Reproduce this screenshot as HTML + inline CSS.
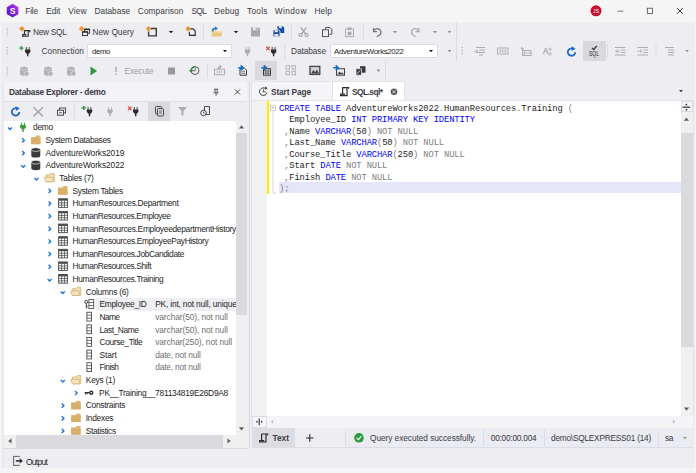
<!DOCTYPE html><html><head><meta charset="utf-8"><title>dbForge Studio</title><style>html,body{margin:0;padding:0;background:#eeeef2;}
#app{position:relative;width:696px;height:473px;overflow:hidden;background:#eeeef2;font-family:"Liberation Sans",sans-serif;}
#app div{position:absolute;}
#app span{position:absolute;white-space:pre;}
#app svg{position:absolute;left:0;top:0;}
#app .cl{position:absolute;left:279px;white-space:pre;font-family:"Liberation Mono","DejaVu Sans Mono",monospace;font-size:8.8px;line-height:11.43px;letter-spacing:-0.123px;height:11.43px;}
#app .cl b{font-weight:400;}
</style></head><body><div id="app"><div style="left:0px;top:0px;width:696px;height:21.7px;background:#f5f5f5;"></div>
<div style="left:0px;top:22px;width:696px;height:451px;background:#eeeef2;"></div>
<div style="left:0px;top:22px;width:1.4px;height:451px;background:#f5f5f5;"></div>
<div style="left:695px;top:22px;width:1px;height:451px;background:#f5f5f5;"></div>
<div style="left:0px;top:467.7px;width:696px;height:5.3px;background:#f5f5f6;"></div>
<div style="left:3.7px;top:82px;width:243.8px;height:19px;background:#f2f2f7;"></div>
<div style="left:3.7px;top:100.6px;width:243.8px;height:0.8px;background:#dedee8;"></div>
<div style="left:1.5px;top:82px;width:2.2px;height:386px;background:#eaeaf1;"></div>
<div style="left:3.7px;top:120.5px;width:232px;height:314.5px;background:#ffffff;"></div>
<div style="left:235.7px;top:120.5px;width:11.8px;height:314.5px;background:#f0f0f0;"></div>
<div style="left:235.7px;top:133px;width:11.8px;height:182px;background:#d9d9de;"></div>
<div style="left:3.7px;top:435px;width:244px;height:12.5px;background:#f0f0f0;"></div>
<div style="left:16px;top:435px;width:207px;height:12.5px;background:#d9d9de;"></div>
<div style="left:235.7px;top:435px;width:11.8px;height:12.5px;background:#f0f0f0;"></div>
<div style="left:96px;top:298px;width:139.7px;height:12.5px;background:#eeeef3;"></div>
<div style="left:148px;top:101.5px;width:22px;height:19px;background:#d8d8dd;"></div>
<div style="left:583px;top:41px;width:23px;height:19.5px;background:#d8d8dd;"></div>
<div style="left:254.8px;top:61px;width:22.2px;height:19px;background:#d8d8dd;"></div>
<div style="left:456px;top:22px;width:1px;height:39px;background:#dcdce6;"></div>
<div style="left:385px;top:61px;width:1px;height:19.5px;background:#dcdce2;"></div>
<div style="left:88px;top:44.5px;width:143px;height:12.5px;background:#ffffff;box-shadow:0 0 0 0.6px #d0d0d8;"></div>
<div style="left:331px;top:44.5px;width:106px;height:12.5px;background:#ffffff;box-shadow:0 0 0 0.6px #d0d0d8;"></div>
<div style="left:252px;top:82px;width:80px;height:19px;background:#f5f5f8;box-shadow:0 0 0 0.6px #dcdce4;"></div>
<div style="left:333px;top:82px;width:70.5px;height:19.5px;background:#ffffff;box-shadow:0 0 0 0.6px #dcdce4;"></div>
<div style="left:252px;top:101px;width:440.5px;height:315px;background:#ffffff;box-shadow:0 0 0 0.6px #dcdce4;"></div>
<div style="left:252px;top:101px;width:14.5px;height:315px;background:#f2f2f2;"></div>
<div style="left:266.5px;top:101px;width:2.5px;height:92.5px;background:#ffee00;"></div>
<div style="left:279px;top:182px;width:401.5px;height:10.9px;background:#e6e6fb;"></div>
<div style="left:680.5px;top:101px;width:12px;height:315px;background:#f0f0f0;"></div>
<div style="left:680.5px;top:101.2px;width:12px;height:11.3px;background:#f6f6f9;box-shadow:inset 0 0 0 0.7px #d2d2e2;"></div>
<div style="left:680.5px;top:133px;width:12px;height:214px;background:#dadade;"></div>
<div style="left:252px;top:416px;width:440.5px;height:12px;background:#f4f4f6;"></div>
<div style="left:252px;top:416.2px;width:14.6px;height:11.5px;background:#f6f6f9;box-shadow:inset 0 0 0 0.7px #d2d2e2;"></div>
<div style="left:248.6px;top:82px;width:0.8px;height:366px;background:#dadae6;"></div>
<div style="left:3.3px;top:447.6px;width:246px;height:0.8px;background:#dadae6;"></div>
<div style="left:252px;top:428px;width:440.5px;height:19.5px;background:#ebebf2;"></div>
<div style="left:252px;top:428px;width:43px;height:19.5px;background:#dcdce1;"></div>
<div style="left:295px;top:428px;width:50px;height:19.5px;background:#eeeef2;"></div>
<div style="left:252px;top:447px;width:440.5px;height:1px;background:#dcdce6;"></div>
<div style="left:344.5px;top:430px;width:1px;height:16px;background:#dcdce4;"></div>
<div style="left:483px;top:430px;width:1px;height:16px;background:#dcdce4;"></div>
<div style="left:544px;top:430px;width:1px;height:16px;background:#dcdce4;"></div>
<div style="left:657.5px;top:430px;width:1px;height:16px;background:#dcdce4;"></div>
<svg width="696" height="473" viewBox="0 0 696 473"><path d="M8.0 127.4 L10.0 129.4 L12.0 127.4" fill="none" stroke="#1c78d2" stroke-width="1.4"/>
<path d="M21.6 122.5 v2.6 M24.4 122.5 v2.6" stroke="#3a9a3a" stroke-width="1"/><path d="M20.2 124.9 h5.6 v2.4 l-1.5 2 h-2.6 l-1.5 -2z" fill="#3a9a3a"/><path d="M23 129.0 v3.1" stroke="#3a9a3a" stroke-width="1.4"/>
<path d="M22.2 138.33 L24.3 140.43 L22.2 142.53" fill="none" stroke="#1c78d2" stroke-width="1.4"/>
<path d="M31.0 137.03 h4.2 l1.2 -1.5 h4 v8.6 h-9.4z" fill="#dcb67a"/><rect x="31.0" y="138.03" width="9.4" height="6.1" fill="#d9ae68"/>
<path d="M22.2 150.96 L24.3 153.06 L22.2 155.16" fill="none" stroke="#1c78d2" stroke-width="1.4"/>
<path d="M31.3 149.66 v6 a4.5 1.9 0 0 0 9 0 v-6z" fill="#3a3a3a"/><ellipse cx="35.8" cy="149.56" rx="4.5" ry="1.9" fill="#3a3a3a" stroke="#fff" stroke-width="0.6"/>
<path d="M21.2 165.29 L23.2 167.29 L25.2 165.29" fill="none" stroke="#1c78d2" stroke-width="1.4"/>
<path d="M31.3 162.29 v6 a4.5 1.9 0 0 0 9 0 v-6z" fill="#3a3a3a"/><ellipse cx="35.8" cy="162.19" rx="4.5" ry="1.9" fill="#3a3a3a" stroke="#fff" stroke-width="0.6"/>
<path d="M34.4 177.92 L36.4 179.92 L38.4 177.92" fill="none" stroke="#1c78d2" stroke-width="1.4"/>
<path d="M46.099999999999994 174.92 h3.4 l1.2 -1.4 h3.6 v8.2 h-8.2z" fill="#efdcb4" stroke="#d9b170" stroke-width="0.8"/><path d="M44.3 177.32 h7.8 l1.4 4.4 h-7.8z" fill="#f3e4c4" stroke="#d9b170" stroke-width="0.8"/>
<path d="M48.599999999999994 188.85000000000002 L50.699999999999996 190.95000000000002 L48.599999999999994 193.05" fill="none" stroke="#1c78d2" stroke-width="1.4"/>
<path d="M57.99999999999999 187.55 h4.2 l1.2 -1.5 h4 v8.6 h-9.4z" fill="#dcb67a"/><rect x="57.99999999999999" y="188.55" width="9.4" height="6.1" fill="#d9ae68"/>
<path d="M48.599999999999994 201.48000000000002 L50.699999999999996 203.58 L48.599999999999994 205.68" fill="none" stroke="#1c78d2" stroke-width="1.4"/>
<rect x="58.599999999999994" y="198.78000000000003" width="8.8" height="8.6" fill="#fff" stroke="#4a4a4a" stroke-width="0.9"/><rect x="58.599999999999994" y="198.78000000000003" width="8.8" height="1.9" fill="#4a4a4a"/><path d="M61.599999999999994 200.58 v6.8 M64.5 200.58 v6.8 M58.599999999999994 202.78000000000003 h8.8 M58.599999999999994 205.08 h8.8" stroke="#4a4a4a" stroke-width="0.75" fill="none"/>
<path d="M48.599999999999994 214.11 L50.699999999999996 216.21 L48.599999999999994 218.31" fill="none" stroke="#1c78d2" stroke-width="1.4"/>
<rect x="58.599999999999994" y="211.41000000000003" width="8.8" height="8.6" fill="#fff" stroke="#4a4a4a" stroke-width="0.9"/><rect x="58.599999999999994" y="211.41000000000003" width="8.8" height="1.9" fill="#4a4a4a"/><path d="M61.599999999999994 213.21 v6.8 M64.5 213.21 v6.8 M58.599999999999994 215.41000000000003 h8.8 M58.599999999999994 217.71 h8.8" stroke="#4a4a4a" stroke-width="0.75" fill="none"/>
<path d="M48.599999999999994 226.74 L50.699999999999996 228.84 L48.599999999999994 230.94" fill="none" stroke="#1c78d2" stroke-width="1.4"/>
<rect x="58.599999999999994" y="224.04000000000002" width="8.8" height="8.6" fill="#fff" stroke="#4a4a4a" stroke-width="0.9"/><rect x="58.599999999999994" y="224.04000000000002" width="8.8" height="1.9" fill="#4a4a4a"/><path d="M61.599999999999994 225.84 v6.8 M64.5 225.84 v6.8 M58.599999999999994 228.04000000000002 h8.8 M58.599999999999994 230.34 h8.8" stroke="#4a4a4a" stroke-width="0.75" fill="none"/>
<path d="M48.599999999999994 239.37 L50.699999999999996 241.47 L48.599999999999994 243.57" fill="none" stroke="#1c78d2" stroke-width="1.4"/>
<rect x="58.599999999999994" y="236.67000000000002" width="8.8" height="8.6" fill="#fff" stroke="#4a4a4a" stroke-width="0.9"/><rect x="58.599999999999994" y="236.67000000000002" width="8.8" height="1.9" fill="#4a4a4a"/><path d="M61.599999999999994 238.47 v6.8 M64.5 238.47 v6.8 M58.599999999999994 240.67000000000002 h8.8 M58.599999999999994 242.97 h8.8" stroke="#4a4a4a" stroke-width="0.75" fill="none"/>
<path d="M48.599999999999994 252.0 L50.699999999999996 254.1 L48.599999999999994 256.2" fill="none" stroke="#1c78d2" stroke-width="1.4"/>
<rect x="58.599999999999994" y="249.3" width="8.8" height="8.6" fill="#fff" stroke="#4a4a4a" stroke-width="0.9"/><rect x="58.599999999999994" y="249.3" width="8.8" height="1.9" fill="#4a4a4a"/><path d="M61.599999999999994 251.1 v6.8 M64.5 251.1 v6.8 M58.599999999999994 253.3 h8.8 M58.599999999999994 255.6 h8.8" stroke="#4a4a4a" stroke-width="0.75" fill="none"/>
<path d="M48.599999999999994 264.63 L50.699999999999996 266.73 L48.599999999999994 268.83" fill="none" stroke="#1c78d2" stroke-width="1.4"/>
<rect x="58.599999999999994" y="261.93" width="8.8" height="8.6" fill="#fff" stroke="#4a4a4a" stroke-width="0.9"/><rect x="58.599999999999994" y="261.93" width="8.8" height="1.9" fill="#4a4a4a"/><path d="M61.599999999999994 263.73 v6.8 M64.5 263.73 v6.8 M58.599999999999994 265.93 h8.8 M58.599999999999994 268.23 h8.8" stroke="#4a4a4a" stroke-width="0.75" fill="none"/>
<path d="M47.599999999999994 278.96 L49.599999999999994 280.96 L51.599999999999994 278.96" fill="none" stroke="#1c78d2" stroke-width="1.4"/>
<rect x="58.599999999999994" y="274.56" width="8.8" height="8.6" fill="#fff" stroke="#4a4a4a" stroke-width="0.9"/><rect x="58.599999999999994" y="274.56" width="8.8" height="1.9" fill="#4a4a4a"/><path d="M61.599999999999994 276.36 v6.8 M64.5 276.36 v6.8 M58.599999999999994 278.56 h8.8 M58.599999999999994 280.86 h8.8" stroke="#4a4a4a" stroke-width="0.75" fill="none"/>
<path d="M60.8 291.59 L62.8 293.59 L64.8 291.59" fill="none" stroke="#1c78d2" stroke-width="1.4"/>
<path d="M72.60000000000001 288.59 h3.4 l1.2 -1.4 h3.6 v8.2 h-8.2z" fill="#efdcb4" stroke="#d9b170" stroke-width="0.8"/><path d="M70.8 290.99 h7.8 l1.4 4.4 h-7.8z" fill="#f3e4c4" stroke="#d9b170" stroke-width="0.8"/>
<rect x="88.9" y="299.62000000000006" width="4.8" height="8.8" fill="#fff" stroke="#4a4a4a" stroke-width="0.9"/><path d="M88.9 302.52000000000004 h4.8 M88.9 305.52000000000004 h4.8" stroke="#4a4a4a" stroke-width="0.8"/><circle cx="86.3" cy="301.82000000000005" r="1.5" fill="#fff" stroke="#3c3c3c" stroke-width="1"/><path d="M86.3 303.22 v5.4 M86.3 306.62000000000006 h1.4" stroke="#3c3c3c" stroke-width="1"/>
<rect x="86.9" y="312.25000000000006" width="4.6" height="8.8" fill="#fff" stroke="#4a4a4a" stroke-width="0.9"/><path d="M86.9 315.15000000000003 h4.6 M86.9 318.15000000000003 h4.6" stroke="#4a4a4a" stroke-width="0.8"/>
<rect x="86.9" y="324.88000000000005" width="4.6" height="8.8" fill="#fff" stroke="#4a4a4a" stroke-width="0.9"/><path d="M86.9 327.78000000000003 h4.6 M86.9 330.78000000000003 h4.6" stroke="#4a4a4a" stroke-width="0.8"/>
<rect x="86.9" y="337.51000000000005" width="4.6" height="8.8" fill="#fff" stroke="#4a4a4a" stroke-width="0.9"/><path d="M86.9 340.41 h4.6 M86.9 343.41 h4.6" stroke="#4a4a4a" stroke-width="0.8"/>
<rect x="86.9" y="350.14000000000004" width="4.6" height="8.8" fill="#fff" stroke="#4a4a4a" stroke-width="0.9"/><path d="M86.9 353.04 h4.6 M86.9 356.04 h4.6" stroke="#4a4a4a" stroke-width="0.8"/>
<rect x="86.9" y="362.77000000000004" width="4.6" height="8.8" fill="#fff" stroke="#4a4a4a" stroke-width="0.9"/><path d="M86.9 365.67 h4.6 M86.9 368.67 h4.6" stroke="#4a4a4a" stroke-width="0.8"/>
<path d="M60.8 380.0 L62.8 382.0 L64.8 380.0" fill="none" stroke="#1c78d2" stroke-width="1.4"/>
<path d="M72.60000000000001 377.0 h3.4 l1.2 -1.4 h3.6 v8.2 h-8.2z" fill="#efdcb4" stroke="#d9b170" stroke-width="0.8"/><path d="M70.8 379.40000000000003 h7.8 l1.4 4.4 h-7.8z" fill="#f3e4c4" stroke="#d9b170" stroke-width="0.8"/>
<path d="M75.0 390.93 L77.1 393.03000000000003 L75.0 395.13" fill="none" stroke="#1c78d2" stroke-width="1.4"/>
<circle cx="91.3" cy="392.73" r="1.5" fill="none" stroke="#333" stroke-width="1.4"/><path d="M84.7 392.73 h5" stroke="#333" stroke-width="1.4"/><path d="M85.4 392.73 v1.7 M87.1 392.73 v1.5" stroke="#333" stroke-width="1"/>
<path d="M61.8 403.56 L63.9 405.66 L61.8 407.76" fill="none" stroke="#1c78d2" stroke-width="1.4"/>
<path d="M71.2 402.26 h4.2 l1.2 -1.5 h4 v8.6 h-9.4z" fill="#dcb67a"/><rect x="71.2" y="403.26" width="9.4" height="6.1" fill="#d9ae68"/>
<path d="M61.8 416.19 L63.9 418.29 L61.8 420.39" fill="none" stroke="#1c78d2" stroke-width="1.4"/>
<path d="M71.2 414.89 h4.2 l1.2 -1.5 h4 v8.6 h-9.4z" fill="#dcb67a"/><rect x="71.2" y="415.89" width="9.4" height="6.1" fill="#d9ae68"/>
<path d="M61.8 428.82 L63.9 430.92 L61.8 433.02" fill="none" stroke="#1c78d2" stroke-width="1.4"/>
<path d="M71.2 427.52 h4.2 l1.2 -1.5 h4 v8.6 h-9.4z" fill="#dcb67a"/><rect x="71.2" y="428.52" width="9.4" height="6.1" fill="#d9ae68"/>
<rect x="270.5" y="105.2" width="5" height="5" fill="#fff" stroke="#b4b4b4" stroke-width="0.7"/><path d="M271.7 107.7 h2.6" stroke="#808080" stroke-width="0.7"/>
<path d="M273 110.5 V193 H276" fill="none" stroke="#c8c8c8" stroke-width="0.7"/>
<rect x="6.7" y="28.1" width="0.9" height="0.9" fill="#8c8c94"/>
<rect x="6.7" y="30.3" width="0.9" height="0.9" fill="#8c8c94"/>
<rect x="6.7" y="32.5" width="0.9" height="0.9" fill="#8c8c94"/>
<rect x="6.7" y="34.7" width="0.9" height="0.9" fill="#8c8c94"/>
<path d="M21.9 26.5 l0.9 1.4 l1.4 0.9 l-1.4 0.9 l-0.9 1.4 l-0.9 -1.4 l-1.4 -0.9 l1.4 -0.9z" fill="#e8912d" stroke="#e8912d" stroke-width="0.9" stroke-linejoin="round"/><path d="M20.4 27.3 l3 3 M23.4 27.3 l-3 3" stroke="#e8912d" stroke-width="0.9"/>
<path d="M24.2 30.6 h5.6 v1.6 M28.2 30.6 v5.6 h-5.6 v-1.6 h3.8" fill="none" stroke="#2b2b2b" stroke-width="1.1"/><path d="M24.4 30.6 v4" stroke="#2b2b2b" stroke-width="1.1"/>
<path d="M81.6 26.5 l0.9 1.4 l1.4 0.9 l-1.4 0.9 l-0.9 1.4 l-0.9 -1.4 l-1.4 -0.9 l1.4 -0.9z" fill="#e8912d" stroke="#e8912d" stroke-width="0.9" stroke-linejoin="round"/><path d="M80.1 27.3 l3 3 M83.1 27.3 l-3 3" stroke="#e8912d" stroke-width="0.9"/>
<rect x="84.4" y="29.2" width="5.2" height="4" fill="none" stroke="#2b2b2b" stroke-width="0.9"/><path d="M84.4 29.4 h5.2" stroke="#2b2b2b" stroke-width="1.4"/><rect x="82.4" y="31.8" width="5.2" height="3.8" fill="#eeeef2" stroke="#2b2b2b" stroke-width="0.9"/><path d="M82.4 32 h5.2" stroke="#2b2b2b" stroke-width="1.4"/>
<path d="M148.6 26.5 l0.9 1.4 l1.4 0.9 l-1.4 0.9 l-0.9 1.4 l-0.9 -1.4 l-1.4 -0.9 l1.4 -0.9z" fill="#e8912d" stroke="#e8912d" stroke-width="0.9" stroke-linejoin="round"/><path d="M147.1 27.3 l3 3 M150.1 27.3 l-3 3" stroke="#e8912d" stroke-width="0.9"/>
<path d="M151 28.5 h5.3 v7.4 h-7.7 v-4.4" fill="none" stroke="#3a3a3a" stroke-width="1.4"/>
<path d="M168.7 30.9 h4.6 l-2.3 2.4z" fill="#1e1e1e"/>
<path d="M188.2 26.5 l0.9 1.4 l1.4 0.9 l-1.4 0.9 l-0.9 1.4 l-0.9 -1.4 l-1.4 -0.9 l1.4 -0.9z" fill="#e8912d" stroke="#e8912d" stroke-width="0.9" stroke-linejoin="round"/><path d="M186.7 27.3 l3 3 M189.7 27.3 l-3 3" stroke="#e8912d" stroke-width="0.9"/>
<path d="M190.4 28.9 h2.6 l2.2 2.2 v4.3 h-5.8 v-3.6" fill="none" stroke="#2b2b2b" stroke-width="1.1"/>
<path d="M203.5 25 V39" stroke="#d4d4dc" stroke-width="0.8"/>
<path d="M211.5 30 h3.5 l1 1.2 h5.5 v5.3 h-10z" fill="#efd7a0"/><path d="M211.5 36.5 l1.6 -3.8 h9.4 l-1.6 3.8z" fill="#e9c77f"/><path d="M212.8 31.4 v-1.2 a1.8 1.8 0 0 1 1.8 -1.8 h1" fill="none" stroke="#1c6bc2" stroke-width="1.5"/><path d="M215.2 26.2 l2.6 2.2 l-2.6 2.2z" fill="#1c6bc2"/>
<path d="M233.7 30.9 h4.6 l-2.3 2.4z" fill="#1e1e1e"/>
<path d="M251.0 27.5 h7.5 l1.5 1.5 v7.5 h-9z" fill="#a8a8a8"/><rect x="252.9" y="27.5" width="4.6" height="2.8" fill="#eeeef2"/><rect x="255.7" y="28.0" width="1.2" height="1.8" fill="#a8a8a8"/>
<path d="M277.4 26.2 h5.4 l1.4 1.4 v5.4 h-6.8z" fill="#1550a8"/><rect x="279" y="26.2" width="3" height="2" fill="#dfe6f2"/>
<path d="M273 29.8 h5.6 l1.4 1.4 v5.6 h-7z" fill="#1550a8" stroke="#eeeef2" stroke-width="0.8"/><rect x="274.6" y="30.2" width="3.2" height="2" fill="#dfe6f2"/><rect x="274.4" y="34" width="4" height="2.4" fill="#dfe6f2"/>
<path d="M291.5 25 V39" stroke="#d4d4dc" stroke-width="0.8"/>
<path d="M284.8 44 V59" stroke="#d4d4dc" stroke-width="0.8"/>
<path d="M207.5 63.5 V78.5" stroke="#d4d4dc" stroke-width="0.8"/>
<path d="M300.8 27.3 l4.8 6.6 M306.4 27.3 l-4.8 6.6" stroke="#a4a4a4" stroke-width="1.4"/><circle cx="300.6" cy="35" r="1.5" fill="none" stroke="#a4a4a4" stroke-width="1.2"/><circle cx="306.6" cy="35" r="1.5" fill="none" stroke="#a4a4a4" stroke-width="1.2"/>
<path d="M325.5 29.5 v-2 h4.5 l1.8 1.8 v5 h-2.5" fill="none" stroke="#444" stroke-width="0.9"/><rect x="322.5" y="29.8" width="6" height="6.8" fill="#eeeef2" stroke="#444" stroke-width="0.9"/>
<rect x="345.5" y="29" width="8" height="7.6" fill="none" stroke="#adadad" stroke-width="1"/><rect x="347.5" y="27.4" width="4" height="2.6" fill="#adadad"/><rect x="347.6" y="31.6" width="3.8" height="3.6" fill="#adadad"/>
<path d="M363.5 25 V39" stroke="#d4d4dc" stroke-width="0.8"/>
<path d="M373.5 28 v3.6 h3.6" fill="none" stroke="#7a7a7a" stroke-width="1.2"/><path d="M373.8 31.4 a3.6 3.6 0 1 1 4.6 4.2 l-1.6 1.2" fill="none" stroke="#7a7a7a" stroke-width="1.3"/>
<path d="M393 30.9 h4 l-2 2.4z" fill="#8a8a8a"/>
<path d="M419 28 v3.6 h-3.6" fill="none" stroke="#adadad" stroke-width="1.2"/><path d="M418.7 31.4 a3.6 3.6 0 1 0 -4.6 4.2 l1.6 1.2" fill="none" stroke="#adadad" stroke-width="1.3"/>
<path d="M433 30.9 h4 l-2 2.4z" fill="#8a8a8a"/>
<path d="M447.7 30.9 h3.6 l-1.8 2.4z" fill="#8a8a8a"/>
<rect x="6.7" y="47.1" width="0.9" height="0.9" fill="#8c8c94"/>
<rect x="6.7" y="49.3" width="0.9" height="0.9" fill="#8c8c94"/>
<rect x="6.7" y="51.5" width="0.9" height="0.9" fill="#8c8c94"/>
<rect x="6.7" y="53.7" width="0.9" height="0.9" fill="#8c8c94"/>
<path d="M26.3 47.099999999999994 v2.6 M29.099999999999998 47.099999999999994 v2.6" stroke="#2b2b2b" stroke-width="0.9"/><path d="M25.0 49.5 h5.4 v2.2 l-1.4 2 h-2.6 l-1.4 -2z" fill="#2b2b2b"/><path d="M27.7 53.3 v3" stroke="#2b2b2b" stroke-width="1.4"/>
<path d="M19.3 48.1 h4.2 M21.4 46 v4.2" stroke="#2e9a3e" stroke-width="1.4"/>
<path d="M223 49.9 h4 l-2 2.4z" fill="#1e1e1e"/>
<path d="M246.1 47.099999999999994 v2.6 M248.9 47.099999999999994 v2.6" stroke="#adadad" stroke-width="0.9"/><path d="M244.8 49.5 h5.4 v2.2 l-1.4 2 h-2.6 l-1.4 -2z" fill="#adadad"/><path d="M247.5 53.3 v3" stroke="#adadad" stroke-width="1.4"/>
<path d="M272.20000000000005 47.099999999999994 v2.6 M275.0 47.099999999999994 v2.6" stroke="#2b2b2b" stroke-width="0.9"/><path d="M270.90000000000003 49.5 h5.4 v2.2 l-1.4 2 h-2.6 l-1.4 -2z" fill="#2b2b2b"/><path d="M273.6 53.3 v3" stroke="#2b2b2b" stroke-width="1.4"/>
<path d="M266.2 46.6 l3.5 3.6 M269.7 46.6 l-3.5 3.6" stroke="#d04030" stroke-width="1.1"/>
<path d="M429 49.9 h4 l-2 2.4z" fill="#1e1e1e"/>
<path d="M447.7 49.9 h3.6 l-1.8 2.4z" fill="#8a8a8a"/>
<rect x="461.7" y="47.1" width="0.9" height="0.9" fill="#8c8c94"/>
<rect x="461.7" y="49.3" width="0.9" height="0.9" fill="#8c8c94"/>
<rect x="461.7" y="51.5" width="0.9" height="0.9" fill="#8c8c94"/>
<rect x="461.7" y="53.7" width="0.9" height="0.9" fill="#8c8c94"/>
<path d="M476 47.5 h9 M479 50 h6 M476 52.5 h9 M479 55 h4" stroke="#adadad" stroke-width="1"/><path d="M474 51.2 h4 m-1.6 -1.6 l1.6 1.6 l-1.6 1.6" fill="none" stroke="#adadad" stroke-width="0.9"/>
<rect x="497.5" y="48" width="10.5" height="6" fill="none" stroke="#adadad" stroke-width="1"/><path d="M500.3 49.5 v3 M502.8 49.5 v3 M505.3 49.5 v3" stroke="#adadad" stroke-width="1.2"/>
<path d="M521 46.5 l3.5 3 h-3.5z" fill="#adadad"/><rect x="522.5" y="50.5" width="8.5" height="5" fill="none" stroke="#adadad" stroke-width="1"/><path d="M524.5 50.5 v5 M522.5 53 h8.5" stroke="#adadad" stroke-width="0.8"/>
<path d="M550 47.5 v3.4 M548.3 49.2 h3.4 M548.3 53 h3.4 M548.3 54.8 h3.4" stroke="#adadad" stroke-width="0.9"/>
<path d="M575.2 52.2 a3.7 3.7 0 1 1 -2.2 -3.5" fill="none" stroke="#1c6bc2" stroke-width="1.8"/><path d="M571.7 46.3 l3.8 2.4 l-3.8 2.4z" fill="#1c6bc2"/>
<path d="M592 47.8 l1.7 1.8 l3 -3.6" fill="none" stroke="#2b2b2b" stroke-width="1.2"/>
<path d="M607.5 44 V58" stroke="#d4d4dc" stroke-width="0.8"/>
<path d="M615 47.5 h10.5 M615 55 h10.5 M621 50 h4.5 M621 52.5 h4.5" stroke="#adadad" stroke-width="1"/><path d="M614.5 51.2 h5 m-1.8 -1.8 l-1.9 1.8 l1.9 1.8" fill="none" stroke="#adadad" stroke-width="0.9" transform="translate(0.5 0)"/>
<path d="M637.5 47.5 h10.5 M637.5 55 h10.5 M643.5 50 h4.5 M643.5 52.5 h4.5" stroke="#adadad" stroke-width="1"/><path d="M637 51.2 h5 m-1.8 -1.8 l1.8 1.8 l-1.8 1.8" fill="none" stroke="#adadad" stroke-width="0.9"/>
<path d="M656 44 V58" stroke="#d4d4dc" stroke-width="0.8"/>
<path d="M665 47.5 h9 M668 50 h6 M668 52.5 h6 M668 55 h6" stroke="#adadad" stroke-width="1"/>
<path d="M685.2 49.9 h3.6 l-1.8 2.4z" fill="#8a8a8a"/>
<rect x="6.7" y="67.1" width="0.9" height="0.9" fill="#8c8c94"/>
<rect x="6.7" y="69.3" width="0.9" height="0.9" fill="#8c8c94"/>
<rect x="6.7" y="71.5" width="0.9" height="0.9" fill="#8c8c94"/>
<rect x="6.7" y="73.7" width="0.9" height="0.9" fill="#8c8c94"/>
<path d="M20 68.4 v5.6 a4 1.8 0 0 0 8 0 v-5.6z" fill="#b2b2b4"/><ellipse cx="24" cy="68.2" rx="4" ry="1.8" fill="#b2b2b4" stroke="#eeeef2" stroke-width="0.5"/><circle cx="26.6" cy="73.8" r="2.4" fill="#b2b2b4" stroke="#eeeef2" stroke-width="0.6"/>
<path d="M44 68.4 v5.6 a4 1.8 0 0 0 8 0 v-5.6z" fill="#b2b2b4"/><ellipse cx="48" cy="68.2" rx="4" ry="1.8" fill="#b2b2b4" stroke="#eeeef2" stroke-width="0.5"/><circle cx="50.6" cy="73.8" r="2.4" fill="#b2b2b4" stroke="#eeeef2" stroke-width="0.6"/>
<path d="M67 68.4 v5.6 a4 1.8 0 0 0 8 0 v-5.6z" fill="#b2b2b4"/><ellipse cx="71" cy="68.2" rx="4" ry="1.8" fill="#b2b2b4" stroke="#eeeef2" stroke-width="0.5"/><circle cx="73.6" cy="73.8" r="2.4" fill="#b2b2b4" stroke="#eeeef2" stroke-width="0.6"/>
<path d="M90.5 66.4 l6.6 4.6 l-6.6 4.6z" fill="#2e9a3e"/>
<path d="M116 66.8 v5.2 M116 73.6 v1.4" stroke="#a0a0a0" stroke-width="1.2"/>
<rect x="168" y="67.5" width="7" height="7" fill="#9a9a9a"/>
<circle cx="195" cy="70.6" r="3.9" fill="none" stroke="#444" stroke-width="0.9"/><path d="M191.2 70.8 a3.9 3.9 0 0 1 3.8 -4.1" fill="none" stroke="#2e8b3e" stroke-width="1.5"/><path d="M188.8 70 l2.4 3 l2.2 -3z" fill="#2e8b3e"/><path d="M195.2 68.4 v2.4 h-1.8" fill="none" stroke="#444" stroke-width="0.8"/>
<g transform="translate(0,-0.8)">
<rect x="214.5" y="70" width="10" height="5.5" fill="none" stroke="#adadad" stroke-width="1"/><path d="M217.3 71.6 v2.4 M219.6 71.6 v2.4 M221.9 71.6 v2.4" stroke="#adadad" stroke-width="1"/><path d="M217 69.5 l3 -3.6 l2 1.4 l-2.4 2.4" fill="#adadad"/>
<path d="M240 69 h4.5 l2 2 v5 h-6.5z" fill="none" stroke="#3a3a3a" stroke-width="1"/><path d="M241.5 72 h3.5 M241.5 74 h3.5" stroke="#3a3a3a" stroke-width="0.7"/><path d="M238.3 68.6 h4 M240.7 66.2 l2.6 2.4 l-2.6 2.4" fill="none" stroke="#1c6bc2" stroke-width="1.6"/>
<rect x="263.5" y="69.5" width="7" height="6.5" fill="#fff" stroke="#3a3a3a" stroke-width="1"/><path d="M263.5 71.8 h7 M263.5 73.9 h7 M265.8 69.5 v6.5 M268.2 69.5 v6.5" stroke="#3a3a3a" stroke-width="0.8"/><path d="M261.3 68.6 h4 M263.7 66.2 l2.6 2.4 l-2.6 2.4" fill="none" stroke="#1c6bc2" stroke-width="1.6"/>
<rect x="286" y="66.5" width="3.6" height="3.4" fill="none" stroke="#adadad" stroke-width="0.9"/><rect x="292" y="66.5" width="3.6" height="3.4" fill="none" stroke="#adadad" stroke-width="0.9"/><rect x="286" y="72" width="3.6" height="3.6" fill="none" stroke="#adadad" stroke-width="0.9"/><rect x="292" y="72" width="3.6" height="3.6" fill="none" stroke="#adadad" stroke-width="0.9"/>
<rect x="310" y="67.2" width="9.8" height="8" fill="#d4d4d6" stroke="#444" stroke-width="1.3"/><path d="M311 74.4 l2.4 -3.6 l1.8 2.2 l1.6 -2.6 l2.2 4z" fill="#444"/>
<rect x="336.5" y="69.6" width="8" height="6.4" fill="none" stroke="#3a3a3a" stroke-width="1"/><path d="M337.5 75 l2 -2.6 l1.5 1.6 l1.2 -1 l1.6 2z" fill="#3a3a3a"/><path d="M333.3 68.6 h4 M335.7 66.2 l2.6 2.4 l-2.6 2.4" fill="none" stroke="#1c6bc2" stroke-width="1.6"/>
<path d="M360 67 h5.5 v6.5 h-5.5z" fill="#3a3a3a"/><path d="M356 69.5 h5.5 v6.5 h-5.5z" fill="#3a3a3a" stroke="#eeeef2" stroke-width="0.7"/><path d="M357 74.6 l3.4 -3.6" stroke="#eeeef2" stroke-width="0.8"/>
</g>
<path d="M376.7 69.60000000000001 h3.6 l-1.8 2.4z" fill="#8a8a8a"/>
<defs><linearGradient id="lg" x1="0" y1="1" x2="1" y2="0"><stop offset="0" stop-color="#4a12d6"/><stop offset="0.6" stop-color="#8424dc"/><stop offset="1" stop-color="#c23ce0"/></linearGradient></defs>
<path d="M12.6 4.6 l5.2 3 v6.2 l-5.2 3 l-5.2 -3 v-6.2z" fill="url(#lg)" stroke="url(#lg)" stroke-width="1.2" stroke-linejoin="round"/>
<circle cx="596" cy="10.8" r="5.5" fill="#c8102e"/>
<path d="M617.5 11.2 h5.8" stroke="#444" stroke-width="0.7"/>
<rect x="647.3" y="8.2" width="5.3" height="5.3" fill="none" stroke="#4a4a4a" stroke-width="0.8"/>
<path d="M677 8 l5.8 5.8 M682.8 8 l-5.8 5.8" stroke="#1e1e1e" stroke-width="0.9"/>
<path d="M214.3 89.2 h3.6 M215 89.2 v3.4 M217.2 89.2 v3.4 M213.6 92.8 h5 M216.1 92.8 v2.8" stroke="#3a3a3a" stroke-width="0.8" fill="none"/>
<path d="M235 89.4 l5 5 M240 89.4 l-5 5" stroke="#3a3a3a" stroke-width="0.9"/>
<path d="M19.3 112 a3.7 3.7 0 1 1 -2.2 -3.5" fill="none" stroke="#1c6bc2" stroke-width="1.8"/><path d="M15.8 106.2 l3.8 2.4 l-3.8 2.4z" fill="#1c6bc2"/>
<path d="M33.5 107.2 l9.4 9.2 M42.9 107.2 l-9.4 9.2" stroke="#a8a8a8" stroke-width="1.5"/>
<rect x="59.5" y="108" width="6" height="5" fill="none" stroke="#3a3a3a" stroke-width="0.9"/><rect x="57.5" y="110.2" width="6" height="5" fill="#eeeef2" stroke="#3a3a3a" stroke-width="0.9"/><path d="M59 112.7 h3" stroke="#3a3a3a" stroke-width="0.8"/>
<path d="M74.3 103 V119" stroke="#d4d4dc" stroke-width="0.8"/>
<path d="M88.1 107.1 v2.6 M90.9 107.1 v2.6" stroke="#2b2b2b" stroke-width="0.9"/><path d="M86.8 109.5 h5.4 v2.2 l-1.4 2 h-2.6 l-1.4 -2z" fill="#2b2b2b"/><path d="M89.5 113.3 v3" stroke="#2b2b2b" stroke-width="1.4"/>
<path d="M81.6 108 h4.2 M83.7 105.9 v4.2" stroke="#2e9a3e" stroke-width="1.4"/>
<path d="M108.6 107.1 v2.6 M111.4 107.1 v2.6" stroke="#adadad" stroke-width="0.9"/><path d="M107.3 109.5 h5.4 v2.2 l-1.4 2 h-2.6 l-1.4 -2z" fill="#adadad"/><path d="M110 113.3 v3" stroke="#adadad" stroke-width="1.4"/>
<path d="M134.29999999999998 107.1 v2.6 M137.1 107.1 v2.6" stroke="#2b2b2b" stroke-width="0.9"/><path d="M133.0 109.5 h5.4 v2.2 l-1.4 2 h-2.6 l-1.4 -2z" fill="#2b2b2b"/><path d="M135.7 113.3 v3" stroke="#2b2b2b" stroke-width="1.4"/>
<path d="M128 106.6 l3.5 3.6 M131.5 106.6 l-3.5 3.6" stroke="#d04030" stroke-width="1.1"/>
<rect x="155.5" y="106.5" width="6" height="7.5" rx="1" fill="none" stroke="#3a3a3a" stroke-width="0.9"/><rect x="157.5" y="108.5" width="6" height="7.5" rx="1" fill="#d8d8dd" stroke="#3a3a3a" stroke-width="0.9"/><path d="M159 111 h3 M159 113 h3" stroke="#3a3a3a" stroke-width="0.7"/>
<path d="M178 107 h9 l-3.5 4 v4.5 h-2 v-4.5z" fill="#adadad"/>
<path d="M204.5 106.5 h5 v8 h-5z" fill="none" stroke="#3a3a3a" stroke-width="0.9"/><circle cx="203.5" cy="113" r="2.8" fill="#eeeef2" stroke="#3a3a3a" stroke-width="0.9"/><path d="M203.5 111.4 v1.8 h1.4" stroke="#3a3a3a" stroke-width="0.7" fill="none"/>
<path d="M238.9 128.56 h5.2 l-2.6 -3.3800000000000003z" fill="#606060"/>
<path d="M238.9 427.24 h5.2 l-2.6 3.3800000000000003z" fill="#606060"/>
<path d="M11.56 438.4 v5.2 l-3.3800000000000003 -2.6z" fill="#606060"/>
<path d="M227.44 438.4 v5.2 l3.3800000000000003 -2.6z" fill="#606060"/>
<path d="M683.8 120.86 h5.2 l-2.6 -3.3800000000000003z" fill="#606060"/>
<path d="M683.9 407.44 h5.2 l-2.6 3.3800000000000003z" fill="#606060"/>
<path d="M273.2 419.8 v4 l-2.6 -2z" fill="#c0c0c0"/>
<path d="M672.8 419.8 v4 l2.6 -2z" fill="#c0c0c0"/>
<path d="M682.6 107.2 h7.6" stroke="#2b2b2b" stroke-width="1.2"/><path d="M685.1 105.2 h2.6 l-1.3 -1.7z M685.1 109.2 h2.6 l-1.3 1.7z" fill="#2b2b2b"/>
<path d="M259.2 418.4 v6.8" stroke="#2b2b2b" stroke-width="1.1"/><path d="M257.4 420.5 v2.6 l-1.7 -1.3z M261 420.5 v2.6 l1.7 -1.3z" fill="#2b2b2b"/>
<path d="M679 89.9 h4 l-2 2.4z" fill="#3a3a3a"/>
<path d="M267 92.6 a3.8 3.8 0 1 1 -1.2 -3.8" fill="none" stroke="#3a3a3a" stroke-width="1"/><path d="M263.4 89.4 v2.6 h2.2" fill="none" stroke="#3a3a3a" stroke-width="0.9"/><path d="M265.2 86.6 l2.6 1.6 l-2.8 1.4z" fill="#3a3a3a"/>
<path d="M342.4 87.6 h6.2 v1.2 M347 87.6 v8 h-6.4 v-1.4 h4.6" fill="none" stroke="#2b2b2b" stroke-width="1.2"/><path d="M342.6 87.6 v6.6" stroke="#2b2b2b" stroke-width="1.2"/>
<circle cx="394" cy="91.7" r="3.3" fill="#5a5a5a"/><path d="M392.6 90.3 l2.8 2.8 M395.4 90.3 l-2.8 2.8" stroke="#fff" stroke-width="0.8"/>
<path d="M261.4 434 h6.2 v1.2 M266 434 v8 h-6.4 v-1.4 h4.6" fill="none" stroke="#2b2b2b" stroke-width="1.2"/><path d="M261.6 434 v6.6" stroke="#2b2b2b" stroke-width="1.2"/>
<path d="M306 438 h7.5 M309.75 434.2 v7.6" stroke="#2b2b2b" stroke-width="1.1"/>
<circle cx="359" cy="437.8" r="4.8" fill="#2e9a3e"/><path d="M356.6 437.8 l1.8 1.8 l3 -3.4" fill="none" stroke="#fff" stroke-width="1.2"/>
<path d="M683.2 436.9 h3.6 l-1.8 2.4z" fill="#8a8a8a"/>
<path d="M19.8 456.4 h-6.2 v9 h6.2" fill="none" stroke="#3a3a3a" stroke-width="0.8"/><path d="M15.8 460.9 h4.4" stroke="#2b2b2b" stroke-width="1.5"/><path d="M19.6 458.3 l3.4 2.6 l-3.4 2.6z" fill="#2b2b2b"/></svg>
<span style="left:25.3px;top:7.22px;font-size:8.3px;line-height:9.96px;font-weight:400;color:#3a3a44;letter-spacing:-0.169px;">File</span>
<span style="left:46.2px;top:7.22px;font-size:8.3px;line-height:9.96px;font-weight:400;color:#3a3a44;letter-spacing:-0.074px;">Edit</span>
<span style="left:68.2px;top:7.22px;font-size:8.3px;line-height:9.96px;font-weight:400;color:#3a3a44;letter-spacing:0.189px;">View</span>
<span style="left:94.5px;top:7.22px;font-size:8.3px;line-height:9.96px;font-weight:400;color:#3a3a44;letter-spacing:0.021px;">Database</span>
<span style="left:137.8px;top:7.22px;font-size:8.3px;line-height:9.96px;font-weight:400;color:#3a3a44;letter-spacing:0.097px;">Comparison</span>
<span style="left:191.5px;top:7.22px;font-size:8.3px;line-height:9.96px;font-weight:400;color:#3a3a44;letter-spacing:-0.770px;">SQL</span>
<span style="left:214px;top:7.22px;font-size:8.3px;line-height:9.96px;font-weight:400;color:#3a3a44;letter-spacing:0.149px;">Debug</span>
<span style="left:247px;top:7.22px;font-size:8.3px;line-height:9.96px;font-weight:400;color:#3a3a44;letter-spacing:0.285px;">Tools</span>
<span style="left:274.8px;top:7.22px;font-size:8.3px;line-height:9.96px;font-weight:400;color:#3a3a44;letter-spacing:0.414px;">Window</span>
<span style="left:314.5px;top:7.22px;font-size:8.3px;line-height:9.96px;font-weight:400;color:#3a3a44;letter-spacing:0.105px;">Help</span>
<span style="left:33px;top:27.92px;font-size:8.3px;line-height:9.96px;font-weight:400;color:#3a3a44;letter-spacing:-0.288px;">New SQL</span>
<span style="left:92.5px;top:27.92px;font-size:8.3px;line-height:9.96px;font-weight:400;color:#3a3a44;letter-spacing:0.000px;">New Query</span>
<span style="left:41.5px;top:47.22px;font-size:8.3px;line-height:9.96px;font-weight:400;color:#3a3a44;letter-spacing:0.052px;">Connection</span>
<span style="left:92px;top:47.46px;font-size:7.9px;line-height:9.48px;font-weight:400;color:#1e1e1e;letter-spacing:-0.438px;">demo</span>
<span style="left:291px;top:47.22px;font-size:8.3px;line-height:9.96px;font-weight:400;color:#3a3a44;letter-spacing:-0.066px;">Database</span>
<span style="left:334px;top:47.46px;font-size:7.9px;line-height:9.48px;font-weight:400;color:#1e1e1e;letter-spacing:-0.347px;">AdventureWorks2022</span>
<span style="left:124.5px;top:66.92px;font-size:8.3px;line-height:9.96px;font-weight:400;color:#a0a0a0;letter-spacing:-0.141px;">Execute</span>
<span style="left:9px;top:87.92px;font-size:8.3px;line-height:9.96px;font-weight:700;color:#3a3a46;letter-spacing:-0.245px;">Database Explorer - demo</span>
<span style="left:271px;top:87.62px;font-size:8.3px;line-height:9.96px;font-weight:700;color:#3a3a46;letter-spacing:-0.105px;">Start Page</span>
<span style="left:352px;top:87.62px;font-size:8.3px;line-height:9.96px;font-weight:700;color:#3a3a46;letter-spacing:-0.510px;">SQL.sql*</span>
<span style="left:272.4px;top:433.92px;font-size:8.3px;line-height:9.96px;font-weight:700;color:#3a3a46;letter-spacing:0.037px;">Text</span>
<span style="left:370px;top:433.92px;font-size:8.3px;line-height:9.96px;font-weight:400;color:#3a3a44;letter-spacing:-0.046px;">Query executed successfully.</span>
<span style="left:490.75px;top:433.92px;font-size:8.3px;line-height:9.96px;font-weight:400;color:#3a3a44;letter-spacing:-0.225px;">00:00:00.004</span>
<span style="left:551px;top:433.92px;font-size:8.3px;line-height:9.96px;font-weight:400;color:#3a3a44;letter-spacing:-0.234px;">demo\SQLEXPRESS01 (14)</span>
<span style="left:665px;top:433.92px;font-size:8.3px;line-height:9.96px;font-weight:400;color:#3a3a44;letter-spacing:-0.383px;">sa</span>
<span style="left:25.9px;top:456.86px;font-size:8.4px;line-height:10.08px;font-weight:400;color:#1e1e1e;letter-spacing:-0.643px;">Output</span>
<span style="left:33px;top:122.46px;font-size:8.4px;line-height:10.08px;font-weight:400;color:#1e1e1e;letter-spacing:-0.238px;">demo</span>
<span style="left:45.6px;top:135.09px;font-size:8.4px;line-height:10.08px;font-weight:400;color:#1e1e1e;letter-spacing:-0.331px;">System Databases</span>
<span style="left:45.6px;top:147.72px;font-size:8.4px;line-height:10.08px;font-weight:400;color:#1e1e1e;letter-spacing:-0.094px;">AdventureWorks2019</span>
<span style="left:45.6px;top:160.35px;font-size:8.4px;line-height:10.08px;font-weight:400;color:#1e1e1e;letter-spacing:-0.094px;">AdventureWorks2022</span>
<span style="left:59.3px;top:172.98px;font-size:8.4px;line-height:10.08px;font-weight:400;color:#1e1e1e;letter-spacing:-0.248px;">Tables (7)</span>
<span style="left:72.6px;top:185.61px;font-size:8.4px;line-height:10.08px;font-weight:400;color:#1e1e1e;letter-spacing:-0.316px;">System Tables</span>
<span style="left:72.6px;top:198.24px;font-size:8.4px;line-height:10.08px;font-weight:400;color:#1e1e1e;letter-spacing:-0.289px;">HumanResources.Department</span>
<span style="left:72.6px;top:210.87px;font-size:8.4px;line-height:10.08px;font-weight:400;color:#1e1e1e;letter-spacing:-0.374px;">HumanResources.Employee</span>
<span style="left:72.6px;top:223.50px;font-size:8.4px;line-height:10.08px;font-weight:400;color:#1e1e1e;letter-spacing:-0.291px;width:163.1px;overflow:hidden;">HumanResources.EmployeedepartmentHistory</span>
<span style="left:72.6px;top:236.13px;font-size:8.4px;line-height:10.08px;font-weight:400;color:#1e1e1e;letter-spacing:-0.345px;">HumanResources.EmployeePayHistory</span>
<span style="left:72.6px;top:248.76px;font-size:8.4px;line-height:10.08px;font-weight:400;color:#1e1e1e;letter-spacing:-0.357px;">HumanResources.JobCandidate</span>
<span style="left:72.6px;top:261.39px;font-size:8.4px;line-height:10.08px;font-weight:400;color:#1e1e1e;letter-spacing:-0.376px;">HumanResources.Shift</span>
<span style="left:72.6px;top:274.02px;font-size:8.4px;line-height:10.08px;font-weight:400;color:#1e1e1e;letter-spacing:-0.370px;">HumanResources.Training</span>
<span style="left:85.8px;top:286.65px;font-size:8.4px;line-height:10.08px;font-weight:400;color:#1e1e1e;letter-spacing:-0.255px;">Columns (6)</span>
<span style="left:99.5px;top:299.28px;font-size:8.4px;line-height:10.08px;font-weight:400;color:#1e1e1e;letter-spacing:-0.289px;">Employee_ID</span>
<span style="left:155.2px;top:299.28px;font-size:8.4px;line-height:10.08px;font-weight:400;color:#1e1e1e;letter-spacing:-0.182px;width:80.5px;overflow:hidden;">PK, int, not null, unique</span>
<span style="left:99.5px;top:311.91px;font-size:8.4px;line-height:10.08px;font-weight:400;color:#1e1e1e;letter-spacing:-0.661px;">Name</span>
<span style="left:155.2px;top:311.91px;font-size:8.4px;line-height:10.08px;font-weight:400;color:#707070;letter-spacing:-0.094px;">varchar(50), not null</span>
<span style="left:99.5px;top:324.54px;font-size:8.4px;line-height:10.08px;font-weight:400;color:#1e1e1e;letter-spacing:-0.425px;">Last_Name</span>
<span style="left:155.2px;top:324.54px;font-size:8.4px;line-height:10.08px;font-weight:400;color:#707070;letter-spacing:-0.094px;">varchar(50), not null</span>
<span style="left:99.5px;top:337.17px;font-size:8.4px;line-height:10.08px;font-weight:400;color:#1e1e1e;letter-spacing:-0.356px;">Course_Title</span>
<span style="left:155.2px;top:337.17px;font-size:8.4px;line-height:10.08px;font-weight:400;color:#707070;letter-spacing:-0.106px;">varchar(250), not null</span>
<span style="left:99.5px;top:349.80px;font-size:8.4px;line-height:10.08px;font-weight:400;color:#1e1e1e;letter-spacing:-0.118px;">Start</span>
<span style="left:155.2px;top:349.80px;font-size:8.4px;line-height:10.08px;font-weight:400;color:#707070;letter-spacing:-0.176px;">date, not null</span>
<span style="left:99.5px;top:362.43px;font-size:8.4px;line-height:10.08px;font-weight:400;color:#1e1e1e;letter-spacing:-0.574px;">Finish</span>
<span style="left:155.2px;top:362.43px;font-size:8.4px;line-height:10.08px;font-weight:400;color:#707070;letter-spacing:-0.176px;">date, not null</span>
<span style="left:85.8px;top:375.06px;font-size:8.4px;line-height:10.08px;font-weight:400;color:#1e1e1e;letter-spacing:-0.248px;">Keys (1)</span>
<span style="left:99.1px;top:387.69px;font-size:8.4px;line-height:10.08px;font-weight:400;color:#1e1e1e;letter-spacing:-0.267px;">PK__Training__781134819E26D9A8</span>
<span style="left:85.8px;top:400.32px;font-size:8.4px;line-height:10.08px;font-weight:400;color:#1e1e1e;letter-spacing:-0.269px;">Constraints</span>
<span style="left:85.8px;top:412.95px;font-size:8.4px;line-height:10.08px;font-weight:400;color:#1e1e1e;letter-spacing:-0.278px;">Indexes</span>
<span style="left:85.8px;top:425.58px;font-size:8.4px;line-height:10.08px;font-weight:400;color:#1e1e1e;letter-spacing:-0.352px;">Statistics</span>
<div class="cl" style="top:103.98px"><b style="color:#0000ff">CREATE TABLE</b><b style="color:#1e1e1e"> AdventureWorks2022</b><b style="color:#808080">.</b><b style="color:#1e1e1e">HumanResources</b><b style="color:#808080">.</b><b style="color:#1e1e1e">Training</b><b style="color:#808080"> (</b></div>
<div class="cl" style="top:115.41px"><b style="color:#1e1e1e">  Employee_ID </b><b style="color:#0000ff">INT PRIMARY KEY IDENTITY</b></div>
<div class="cl" style="top:126.84px"><b style="color:#808080"> ,</b><b style="color:#1e1e1e">Name </b><b style="color:#0000ff">VARCHAR</b><b style="color:#808080">(</b><b style="color:#1e1e1e">50</b><b style="color:#808080">)</b><b style="color:#808080"> NOT NULL</b></div>
<div class="cl" style="top:138.28px"><b style="color:#808080"> ,</b><b style="color:#1e1e1e">Last_Name </b><b style="color:#0000ff">VARCHAR</b><b style="color:#808080">(</b><b style="color:#1e1e1e">50</b><b style="color:#808080">)</b><b style="color:#808080"> NOT NULL</b></div>
<div class="cl" style="top:149.71px"><b style="color:#808080"> ,</b><b style="color:#1e1e1e">Course_Title </b><b style="color:#0000ff">VARCHAR</b><b style="color:#808080">(</b><b style="color:#1e1e1e">250</b><b style="color:#808080">)</b><b style="color:#808080"> NOT NULL</b></div>
<div class="cl" style="top:161.13px"><b style="color:#808080"> ,</b><b style="color:#1e1e1e">Start </b><b style="color:#0000ff">DATE</b><b style="color:#808080"> NOT NULL</b></div>
<div class="cl" style="top:172.56px"><b style="color:#808080"> ,</b><b style="color:#1e1e1e">Finish </b><b style="color:#0000ff">DATE</b><b style="color:#808080"> NOT NULL</b></div>
<div class="cl" style="top:183.99px"><b style="color:#808080">);</b></div>
<span style="left:542.6px;top:46px;font-size:8.6px;line-height:10px;font-weight:700;color:#adadad;letter-spacing:-0.3px">A</span><span style="left:589.4px;top:49.6px;font-size:7px;line-height:8px;color:#2b2b2b;transform:scaleX(0.72);transform-origin:0 0">SQL</span><span style="left:9.8px;top:5.6px;font-size:8.6px;line-height:10px;font-weight:700;color:#fff;">S</span><span style="left:592.9px;top:7.9px;font-size:5px;line-height:6px;font-weight:400;color:#fff;letter-spacing:0.3px">JS</span></div></body></html>
